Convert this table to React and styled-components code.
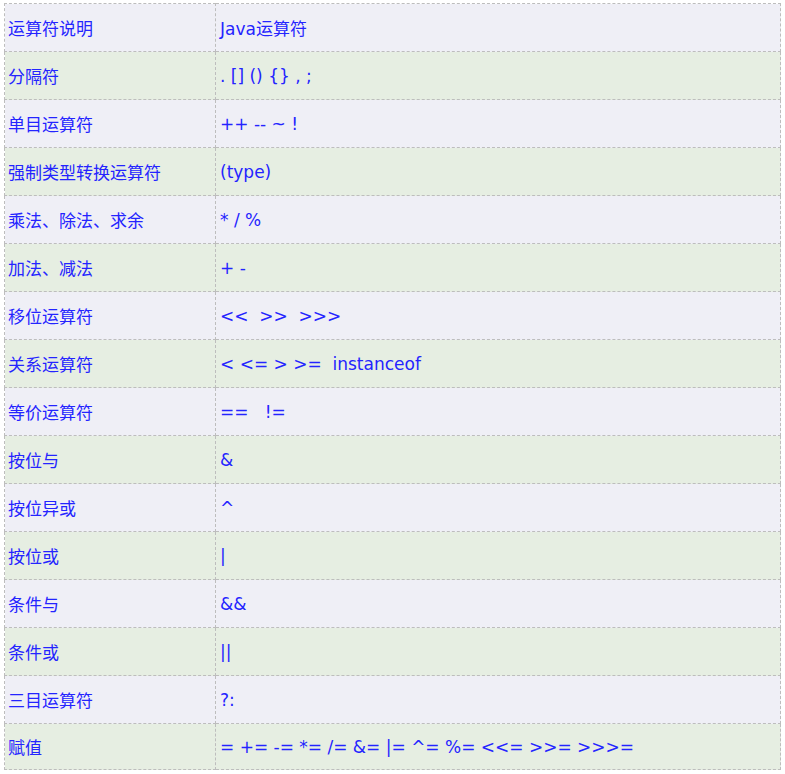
import React from "react";
import styled, { createGlobalStyle } from "styled-components";

const Global = createGlobalStyle`
  html, body { margin: 0; padding: 0; background: #ffffff; }
  body { padding: 3px 0 0 4px; font-family: "DejaVu Sans", Verdana, "Noto Sans CJK SC", sans-serif; }
`;

const Table = styled.table`
  border-collapse: collapse;
  width: 777px;
  table-layout: fixed;
  font-size: 17px;
  color: #2424ff;
`;

const Row = styled.tr`
  height: ${(p) => (p.$last ? "46px" : "48px")};
  background: ${(p) => (p.$alt ? "#e6eee2" : "#efeff6")};
`;

const Cell = styled.td`
  border: 1px dashed #bdbdbd;
  padding: 0 4px 0 4px;
  vertical-align: middle;
  white-space: pre;
  font-family: "DejaVu Sans", Verdana, "Noto Sans CJK SC", sans-serif;
  &:first-child { width: 203px; padding-left: 3px; }
`;

const rows = [
  ["运算符说明", "Java运算符"],
  ["分隔符", ". [] () {} , ;"],
  ["单目运算符", "++ -- ~ !"],
  ["强制类型转换运算符", "(type)"],
  ["乘法、除法、求余", "* / %"],
  ["加法、减法", "+ -"],
  ["移位运算符", "<<  >>  >>>"],
  ["关系运算符", "< <= > >=  instanceof"],
  ["等价运算符", "==   !="],
  ["按位与", "&"],
  ["按位异或", "^"],
  ["按位或", "|"],
  ["条件与", "&&"],
  ["条件或", "||"],
  ["三目运算符", "?:"],
  ["赋值", "= += -= *= /= &= |= ^= %= <<= >>= >>>="],
];

export default function App() {
  return (
    <>
      <Global />
      <Table>
        <tbody>
          {rows.map(([a, b], i) => (
            <Row key={i} $alt={i % 2 === 1} $last={i === rows.length - 1}>
              <Cell>{a}</Cell>
              <Cell>{b}</Cell>
            </Row>
          ))}
        </tbody>
      </Table>
    </>
  );
}
